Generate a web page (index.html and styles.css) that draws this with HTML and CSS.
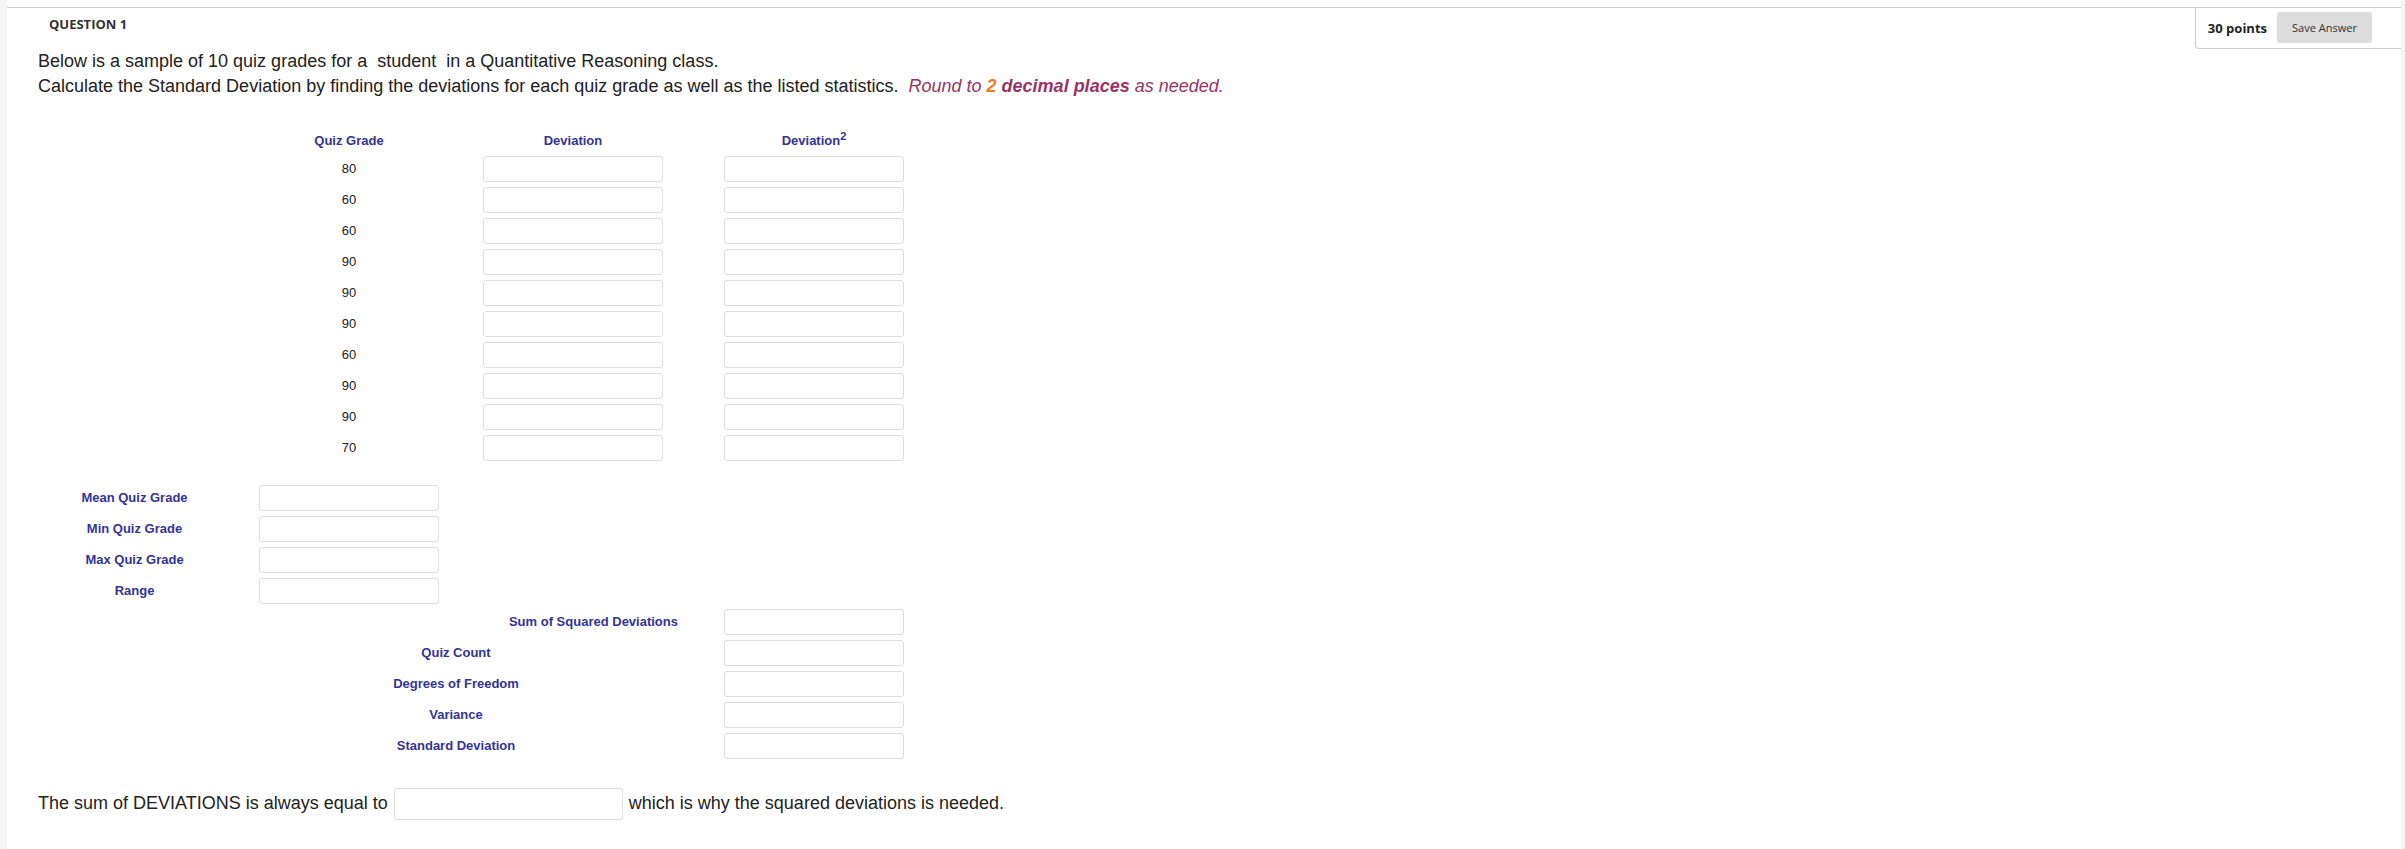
FILE: index.html
```html
<!DOCTYPE html>
<html lang="en">
<head>
    <meta charset="UTF-8">
    <meta name="viewport" content="width=device-width, initial-scale=1.0">
    <title>Question 1</title>
    <link rel="stylesheet" href="styles.css">
</head>
<body>
<div class="page">
    <div class="question-head">
        <h3 class="question-title">QUESTION 1</h3>
        <div class="points-box">
            <span class="points">30 points</span>
            <button class="save-btn" type="button">Save Answer</button>
        </div>
    </div>

    <div class="question-body">
        <div class="intro">
            <p>Below is a sample of 10 quiz grades for a &nbsp;student &nbsp;in a Quantitative Reasoning class.</p>
            <p>Calculate the Standard Deviation by finding the deviations for each quiz grade as well as the listed statistics. &nbsp;<span class="note">Round to <b class="hl">2</b> <b>decimal places</b> as needed.</span></p>
        </div>

        <div class="grades">
            <div class="head">Quiz Grade</div>
            <div class="head">Deviation</div>
            <div class="head">Deviation<sup>2</sup></div>

            <div class="grade">80</div><input type="text"><input type="text">
            <div class="grade">60</div><input type="text"><input type="text">
            <div class="grade">60</div><input type="text"><input type="text">
            <div class="grade">90</div><input type="text"><input type="text">
            <div class="grade">90</div><input type="text"><input type="text">
            <div class="grade">90</div><input type="text"><input type="text">
            <div class="grade">60</div><input type="text"><input type="text">
            <div class="grade">90</div><input type="text"><input type="text">
            <div class="grade">90</div><input type="text"><input type="text">
            <div class="grade">70</div><input type="text"><input type="text">
        </div>

        <div class="stats">
            <div class="label">Mean Quiz Grade</div><input type="text">
            <div class="label">Min Quiz Grade</div><input type="text">
            <div class="label">Max Quiz Grade</div><input type="text">
            <div class="label">Range</div><input type="text">
        </div>

        <div class="stats totals">
            <div class="label sum-label">Sum of Squared Deviations</div><input type="text">
            <div class="label">Quiz Count</div><input type="text">
            <div class="label">Degrees of Freedom</div><input type="text">
            <div class="label">Variance</div><input type="text">
            <div class="label">Standard Deviation</div><input type="text">
        </div>

        <p class="closing">The sum of DEVIATIONS is always equal to <input type="text" class="inline-input"> which is why the squared deviations is needed.</p>
    </div>
</div>
</body>
</html>
```

FILE: styles.css
```css
body {
    margin: 0;
    background-color: #f5f5f5;
    font-family: "Liberation Sans", Arial, sans-serif;
}

.page {
    margin: 0 4px 0 7px;
    padding-top: 7px;
    min-height: 842px;
    background-color: #fff;
}

.question-head {
    display: flex;
    justify-content: space-between;
    align-items: flex-start;
    border-top: 1px solid #ccc;
}

.question-title {
    margin: 7px 0 0 42px;
    font-family: "Open Sans", sans-serif;
    font-size: 13px;
    line-height: 18px;
    font-weight: 700;
    color: #333;
}

.points-box {
    display: flex;
    align-items: center;
    gap: 10px;
    padding: 4px 29px 5px 12px;
    border-left: 1px solid #ccc;
    border-bottom: 1px solid #ccc;
    border-bottom-left-radius: 4px;
}

.points {
    font-family: "Open Sans", sans-serif;
    font-size: 13px;
    font-weight: 700;
    color: #222;
}

.save-btn {
    width: 95px;
    height: 31px;
    padding: 0;
    border: none;
    border-radius: 2px;
    background-color: #dcdcdc;
    font-family: "Open Sans", sans-serif;
    font-size: 11px;
    color: #333;
}

.question-body {
    padding-left: 31px;
}

.intro p {
    margin: 0;
    font-size: 18px;
    line-height: 25px;
    color: #222;
}

.note {
    font-style: italic;
    color: #993366;
}

.note .hl {
    color: #f47b20;
}

input[type="text"] {
    box-sizing: border-box;
    width: 180px;
    height: 26px;
    margin: 0;
    border: 1px solid #dedede;
    border-radius: 3px;
    background: #fff;
}

.grades {
    display: grid;
    grid-template-columns: 146px 180px 180px;
    grid-auto-rows: 26px;
    column-gap: 61px;
    row-gap: 5px;
    margin: 26px 0 0 238px;
}

.head, .label {
    font-size: 13px;
    font-weight: 700;
    color: #333399;
    text-align: center;
}

.head {
    padding-top: 8px;
}

.head sup {
    font-size: 11px;
    line-height: 0;
}

.grade {
    font-size: 13px;
    color: #222;
    text-align: center;
    line-height: 26px;
}

.stats {
    display: grid;
    grid-template-columns: 193px 180px;
    grid-auto-rows: 26px;
    column-gap: 28px;
    row-gap: 5px;
    margin-top: 24px;
}

.stats .label {
    line-height: 26px;
}

.stats.totals {
    grid-template-columns: 448px 180px;
    column-gap: 44px;
    margin: 5px 0 0 194px;
}

.sum-label {
    text-align: right;
    padding-right: 2px;
}

.closing {
    margin: 29px 0 0;
    font-size: 18px;
    line-height: 25px;
    color: #222;
}

.closing .inline-input {
    width: 229px;
    height: 32px;
    margin: 0 1px;
    vertical-align: middle;
}
```
